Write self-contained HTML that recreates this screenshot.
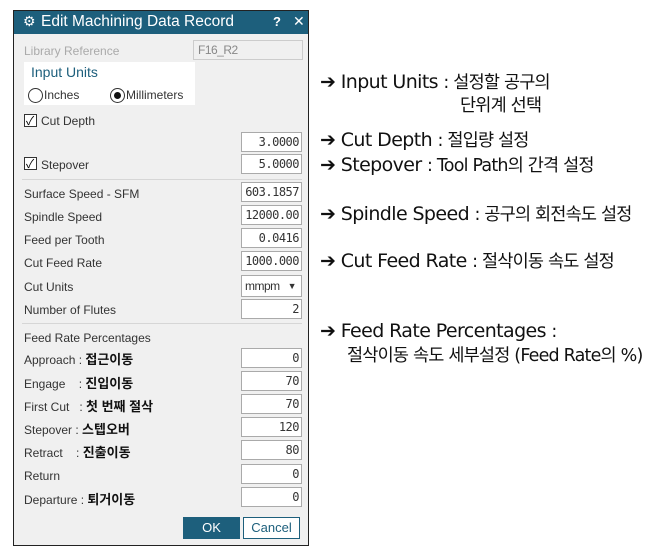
<!DOCTYPE html>
<html><head><meta charset="utf-8"><style>
body{margin:0;width:656px;height:555px;background:#fff;position:relative;overflow:hidden;font-family:"Liberation Sans","Noto Sans CJK KR",sans-serif}
.a{position:absolute;white-space:nowrap}
#dlg{position:absolute;left:13px;top:10px;width:296px;height:536px;background:#f0f0f0;border:1px solid #222;box-sizing:border-box}
#tb{position:absolute;left:0;top:0;width:100%;height:23px;background:#1d5f7c;color:#fff;font-size:15.5px}
.l{position:absolute;left:10px;font-size:12px;color:#333;line-height:15px;white-space:nowrap}
.f{position:absolute;left:227px;width:61px;height:20px;background:#fff;border:1px solid #aaa;box-sizing:border-box;font-size:12px;text-align:right;padding-right:2px;line-height:18px;color:#333;font-family:"DejaVu Sans Mono","Liberation Mono",monospace;letter-spacing:-0.5px;overflow:hidden}
.k{font-size:13px;color:#111;font-weight:bold;line-height:15px}
.sep{position:absolute;left:8px;width:280px;height:1px;background:#d6d6d6}
.cb{position:absolute;left:10px;width:13px;height:13px;border:1px solid #333;background:#fff;box-sizing:border-box}
.r{position:absolute;font-size:19px;color:#111;font-family:"DejaVu Sans","Noto Sans CJK KR",sans-serif;letter-spacing:-0.6px;white-space:nowrap;line-height:24px}
.r i{font-style:normal;font-size:17.5px;font-family:"DejaVu Sans","Noto Sans CJK KR",sans-serif;letter-spacing:-0.8px}
</style></head><body>
<div id="dlg">
<div id="tb"><span class="a" style="left:9px;top:2px;font-size:14px">⚙</span><span class="a" style="left:27px;top:2px">Edit Machining Data Record</span><span class="a" style="left:259px;top:3px;font-size:13px;font-weight:bold">?</span><span class="a" style="left:279px;top:2px;font-size:14px">✕</span></div>
<div class="l" style="top:33px;color:#aaa">Library Reference</div>
<div class="f" style="left:179px;top:29px;width:110px;text-align:left;padding-left:4px;background:#f0f0f0;color:#888;font-family:'Liberation Sans',sans-serif;border-color:#ccc">F16_R2</div>
<div style="position:absolute;left:10px;top:51px;width:171px;height:43px;background:#fff"></div>
<div class="l" style="left:17px;top:54px;font-size:14px;color:#1d5f7c">Input Units</div>
<div style="position:absolute;left:14px;top:77px;width:13px;height:13px;border:1px solid #333;border-radius:50%;background:#fff"></div>
<div class="l" style="left:30px;top:77px">Inches</div>
<div style="position:absolute;left:96px;top:77px;width:13px;height:13px;border:1px solid #333;border-radius:50%;background:#fff"><div style="position:absolute;left:3px;top:3px;width:7px;height:7px;border-radius:50%;background:#111"></div></div>
<div class="l" style="left:112px;top:77px">Millimeters</div>
<div class="cb" style="top:103px"><span class="a" style="left:1px;top:-3px;font-size:12px">✓</span></div>
<div class="l" style="left:27px;top:103px">Cut Depth</div>
<div class="f" style="top:121px">3.0000</div>
<div class="cb" style="top:146px"><span class="a" style="left:1px;top:-3px;font-size:12px">✓</span></div>
<div class="l" style="left:27px;top:147px">Stepover</div>
<div class="f" style="top:143px">5.0000</div>
<div class="sep" style="top:168px"></div>
<div class="l" style="top:176px">Surface Speed - SFM</div><div class="f" style="top:171px">603.1857</div>
<div class="l" style="top:199px">Spindle Speed</div><div class="f" style="top:194px">12000.00</div>
<div class="l" style="top:222px">Feed per Tooth</div><div class="f" style="top:217px">0.0416</div>
<div class="l" style="top:245px">Cut Feed Rate</div><div class="f" style="top:240px">1000.000</div>
<div class="l" style="top:269px">Cut Units</div><div class="f" style="top:264px;height:22px;text-align:left;padding-left:3px;font-family:'Liberation Sans',sans-serif;line-height:20px">mmpm <span style="position:absolute;right:5px;font-size:9px">▼</span></div>
<div class="l" style="top:292px">Number of Flutes</div><div class="f" style="top:288px">2</div>
<div class="sep" style="top:312px"></div>
<div class="l" style="top:320px">Feed Rate Percentages</div>
<div class="l" style="top:341px">Approach : <span class="k">접근이동</span></div><div class="f" style="top:337px">0</div>
<div class="l" style="top:365px">Engage &nbsp;&nbsp; : <span class="k">진입이동</span></div><div class="f" style="top:360px">70</div>
<div class="l" style="top:388px">First Cut &nbsp; : <span class="k">첫 번째 절삭</span></div><div class="f" style="top:383px">70</div>
<div class="l" style="top:411px">Stepover : <span class="k">스텝오버</span></div><div class="f" style="top:406px">120</div>
<div class="l" style="top:434px">Retract &nbsp;&nbsp; : <span class="k">진출이동</span></div><div class="f" style="top:429px">80</div>
<div class="l" style="top:458px">Return</div><div class="f" style="top:453px">0</div>
<div class="l" style="top:481px">Departure : <span class="k">퇴거이동</span></div><div class="f" style="top:476px">0</div>
<div style="position:absolute;left:169px;top:506px;width:57px;height:22px;background:#1d5f7c;color:#fff;font-size:13px;text-align:center;line-height:22px">OK</div>
<div style="position:absolute;left:229px;top:506px;width:57px;height:22px;background:#fff;border:1px solid #1d5f7c;box-sizing:border-box;color:#1d5f7c;font-size:13px;text-align:center;line-height:20px">Cancel</div>
</div>
<div class="r" style="left:320px;top:70px">➔ Input Units <i>: 설정할 공구의</i></div>
<div class="r" style="left:460px;top:93px"><i>단위계 선택</i></div>
<div class="r" style="left:320px;top:128px">➔ Cut Depth <i>: 절입량 설정</i></div>
<div class="r" style="left:320px;top:153px">➔ Stepover <i>: Tool Path의 간격 설정</i></div>
<div class="r" style="left:320px;top:202px">➔ Spindle Speed <i>: 공구의 회전속도 설정</i></div>
<div class="r" style="left:320px;top:249px">➔ Cut Feed Rate <i>: 절삭이동 속도 설정</i></div>
<div class="r" style="left:320px;top:319px">➔ Feed Rate Percentages <i>:</i></div>
<div class="r" style="left:347px;top:343px"><i>절삭이동 속도 세부설정 (Feed Rate의 %)</i></div>
</body></html>
